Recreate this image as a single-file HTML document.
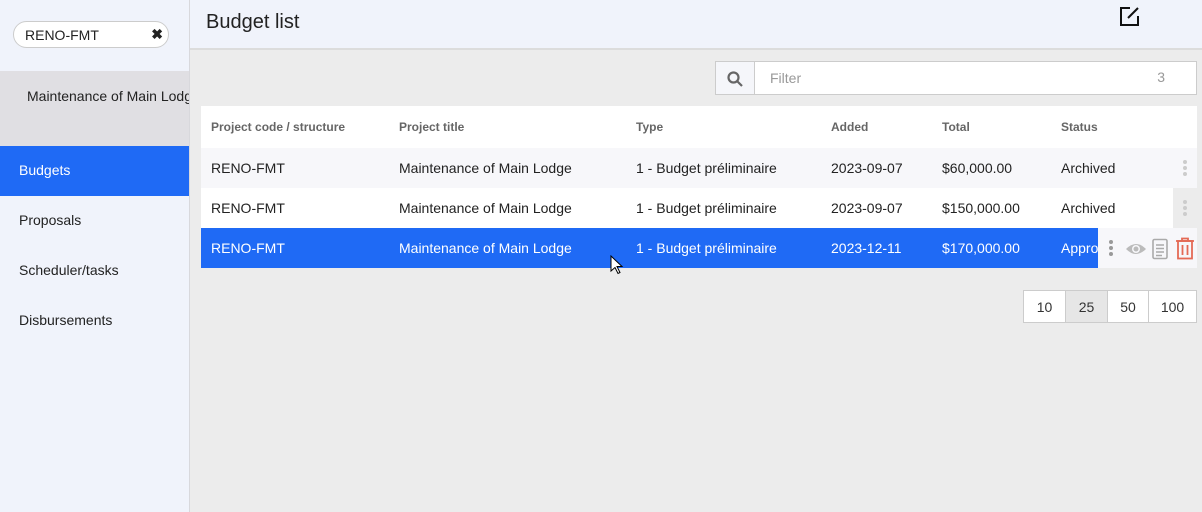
<!DOCTYPE html>
<html><head><meta charset="utf-8"><style>
*{box-sizing:border-box;margin:0;padding:0}
body{width:1202px;height:512px;overflow:hidden;font-family:"Liberation Sans",Arial,sans-serif;background:#ececec;position:relative;color:#222}
.side{position:absolute;left:0;top:0;width:190px;height:512px;background:#f0f3fb;border-right:1px solid #d8d8dc}
.pill{position:absolute;left:13px;top:21px;width:156px;height:27px;border:1px solid #ccc;border-radius:14px;background:#fff;font-size:14px;padding:5px 11px}
.pill b{position:absolute;right:5px;top:4px;font-size:14px}
.gray{position:absolute;left:0;top:71px;width:189px;height:75px;background:#e0dfe3;font-size:14px;padding:17px 0 0 27px;white-space:nowrap;overflow:hidden}
.nav{position:absolute;left:0;width:189px;height:50px;font-size:14px;padding:16px 19px}
.nav.on{background:#1f6af5;color:#fff}
.hdr{position:absolute;left:190px;top:0;width:1012px;height:50px;background:#f0f3fb;border-bottom:2px solid #dcdcdc;font-size:20px;padding:11px 16px}
.sb{position:absolute;left:715px;top:61px;width:40px;height:34px;border:1px solid #ccc;background:#f5f6fa}
.in{position:absolute;left:754px;top:61px;width:443px;height:34px;border:1px solid #ccc;background:#fff;color:#999;font-size:14px;padding:8px 15px}
.in span{position:absolute;right:31px;top:7px}
.row{position:absolute;left:201px;height:40px;font-size:14px}
.row div{position:absolute;top:12px;white-space:nowrap}
.th{font-weight:bold;font-size:12px;color:#666}
.th div{top:14px}
.pg{position:absolute;top:290px;height:33px;border:1px solid #ccc;background:#fff;font-size:14px;text-align:center;padding-top:8px;color:#333}
.dots{position:absolute;width:4px}
.dots i{display:block;width:4px;height:4px;border-radius:2px;margin-bottom:2px}
</style></head><body>
<div class="side">
<div class="pill">RENO-FMT<b>✖</b></div>
<div class="gray">Maintenance of Main Lodge</div>
<div class="nav on" style="top:146px">Budgets</div>
<div class="nav" style="top:196px">Proposals</div>
<div class="nav" style="top:246px">Scheduler/tasks</div>
<div class="nav" style="top:296px">Disbursements</div>
</div>
<div class="hdr">Budget list
<svg style="position:absolute;left:928px;top:4px" width="24" height="24" viewBox="0 0 24 24" fill="none" stroke="#111" stroke-width="2"><path d="M12 4H3v17h17v-9"/><path d="M10 14l10-10"/></svg></div>
<div class="sb"><svg style="position:absolute;left:11px;top:9px" width="16" height="16" viewBox="0 0 16 16" fill="none" stroke="#666" stroke-width="2.2"><circle cx="6.5" cy="6.5" r="5"/><path d="M10 10l5 5"/></svg></div>
<div class="in">Filter<span>3</span></div>
<div class="row th" style="top:106px;width:996px;height:42px;background:#fff"><div style="left:10px">Project code / structure</div><div style="left:198px">Project title</div><div style="left:435px">Type</div><div style="left:630px">Added</div><div style="left:741px">Total</div><div style="left:860px">Status</div></div>
<div class="row" style="top:148px;width:996px;background:#f7f7fa"><div style="left:10px">RENO-FMT</div><div style="left:198px">Maintenance of Main Lodge</div><div style="left:435px">1 - Budget préliminaire</div><div style="left:630px">2023-09-07</div><div style="left:741px">$60,000.00</div><div style="left:860px">Archived</div></div>
<div class="row" style="top:188px;width:972px;background:#fff"><div style="left:10px">RENO-FMT</div><div style="left:198px">Maintenance of Main Lodge</div><div style="left:435px">1 - Budget préliminaire</div><div style="left:630px">2023-09-07</div><div style="left:741px">$150,000.00</div><div style="left:860px">Archived</div></div>
<div class="dots" style="left:1183px;top:160px"><i style="background:#ccc"></i><i style="background:#ccc"></i><i style="background:#ccc"></i></div>
<div class="dots" style="left:1183px;top:200px"><i style="background:#ccc"></i><i style="background:#ccc"></i><i style="background:#ccc"></i></div>
<div class="row" style="top:228px;width:996px;background:#f7f7fa"></div>
<div class="row" style="top:228px;width:897px;background:#1f6af5;color:#fff;overflow:hidden"><div style="left:10px">RENO-FMT</div><div style="left:198px">Maintenance of Main Lodge</div><div style="left:435px">1 - Budget préliminaire</div><div style="left:630px">2023-12-11</div><div style="left:741px">$170,000.00</div><div style="left:860px">Approved</div></div>
<div class="dots" style="left:1109px;top:240px"><i style="background:#999"></i><i style="background:#999"></i><i style="background:#999"></i></div>
<svg style="position:absolute;left:1125px;top:241px" width="22" height="16" viewBox="0 0 22 16"><path d="M1 8Q11-2 21 8Q11 18 1 8Z" fill="#bbb"/><circle cx="11" cy="8" r="4" fill="#f7f7fa"/><circle cx="11" cy="8" r="2.5" fill="#bbb"/></svg>
<svg style="position:absolute;left:1151px;top:238px" width="18" height="22" viewBox="0 0 18 22" fill="none" stroke="#aaa" stroke-width="1.6"><rect x="2" y="1.5" width="14" height="19" rx="1.5"/><path d="M5 7h8M5 10.5h8M5 14h8M5 17.5h6"/></svg>
<svg style="position:absolute;left:1175px;top:237px" width="20" height="23" viewBox="0 0 20 23" fill="none" stroke="#e46a55" stroke-width="1.8"><path d="M1 4h18M7 4V1.5h6V4"/><rect x="3" y="4" width="14" height="17.5"/><path d="M7.5 8v10M12.5 8v10"/></svg>
<svg style="position:absolute;left:610px;top:255px" width="14" height="20" viewBox="0 0 14 20"><path d="M1 1v15l4-3.5 3 6 2-1-3-6h5z" fill="#fff" stroke="#000" stroke-width="1"/></svg>
<div class="pg" style="left:1023px;width:43px">10</div>
<div class="pg" style="left:1065px;width:43px;background:#e6e6e6">25</div>
<div class="pg" style="left:1107px;width:42px">50</div>
<div class="pg" style="left:1148px;width:49px">100</div>
</body></html>
